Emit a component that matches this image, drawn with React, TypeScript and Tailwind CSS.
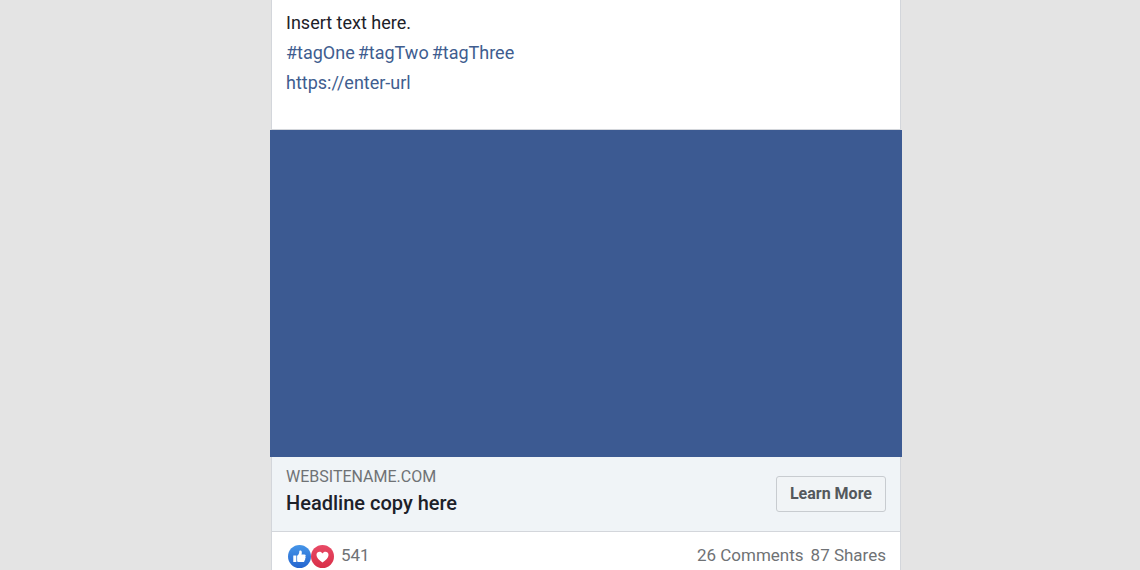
import React from 'react';

const tags = ['#tagOne', '#tagTwo', '#tagThree'];

const LikeIcon: React.FC = () => (
  <svg viewBox="0 0 24 24" className="h-[23px] w-[23px]" aria-hidden="true">
    <defs>
      <linearGradient id="like" x1="0" y1="0" x2="0" y2="1">
        <stop offset="0" stopColor="#4595e8" />
        <stop offset="1" stopColor="#2565cf" />
      </linearGradient>
    </defs>
    <circle cx="12" cy="12" r="12" fill="url(#like)" />
    <path
      d="M5.500 11h3.200v6.800H5.500zM9.500 17.100v-5.800c1.500-1 2.300-2.300 2.300-4.700 0-1.400 2.300-1.400 2.600.6.100 1-.1 2-.4 2.800h3c1.700 0 1.900 1.700 1 2.300.7.700.5 1.600-.2 2 .4.800 0 1.600-.6 1.800.2.900-.3 1.600-1.400 1.600h-3.500c-1.100 0-2.100-.2-2.800-.6z"
      fill="#fff"
    />
  </svg>
);

const LoveIcon: React.FC = () => (
  <svg viewBox="0 0 24 24" className="h-[23px] w-[23px]" aria-hidden="true">
    <defs>
      <linearGradient id="love" x1="0" y1="0" x2="0" y2="1">
        <stop offset="0" stopColor="#e84a66" />
        <stop offset="1" stopColor="#d92f48" />
      </linearGradient>
    </defs>
    <circle cx="12" cy="12" r="12" fill="url(#love)" />
    <path
      d="M12 18.200c-3.400-2.300-6.300-4.700-6.300-7.700C5.700 6.700 10.300 5.900 12 8.900c1.700-3 6.300-2.200 6.300 1.600 0 3-2.900 5.400-6.300 7.700z"
      fill="#fff"
    />
  </svg>
);

export default function App() {
  return (
    <div className="h-screen overflow-hidden bg-[#e4e4e4] pl-8 font-[Roboto,sans-serif] text-[#1d2129]">
      <article className="mx-auto max-w-[632px]">
        {/* Post text */}
        <div className="mx-px border border-t-0 border-[#d3d6db] bg-white px-[14px] pt-2 pb-[31px] text-lg leading-[30px]">
          <p>Insert text here.</p>
          <p className="flex gap-[3px]">
            {tags.map((tag) => (
              <a key={tag} href="#" className="text-[#405d8f]">
                {tag}
              </a>
            ))}
          </p>
          <a href="#" className="block text-[#405d8f]">
            https://enter-url
          </a>
        </div>

        {/* Media */}
        <div className="h-[327px] bg-[#3c5a92]" />

        {/* Link preview */}
        <div className="mx-px flex h-[75px] items-center justify-between border border-t-0 border-[#d3d6db] bg-[#f0f4f7] px-[14px]">
          <div className="pb-1.5">
            <p className="text-base leading-6 text-[#6f7275]">WEBSITENAME.COM</p>
            <h2 className="text-xl leading-7 font-medium">Headline copy here</h2>
          </div>
          <button
            type="button"
            className="h-9 rounded-[3px] border border-[#c8ccd0] bg-[#f1f4f6] px-[13px] text-base font-bold text-[#54585c]"
          >
            Learn More
          </button>
        </div>

        {/* Reactions */}
        <div className="mx-px flex h-12 items-center justify-between border-x border-[#d3d6db] bg-white px-[14px] text-[17px] text-[#6f7275]">
          <div className="flex items-center pl-0.5">
            <LikeIcon />
            <LoveIcon />
            <span className="ml-[7px]">541</span>
          </div>
          <div className="flex gap-[7px]">
            <span>26 Comments</span>
            <span>87 Shares</span>
          </div>
        </div>
      </article>
    </div>
  );
}
